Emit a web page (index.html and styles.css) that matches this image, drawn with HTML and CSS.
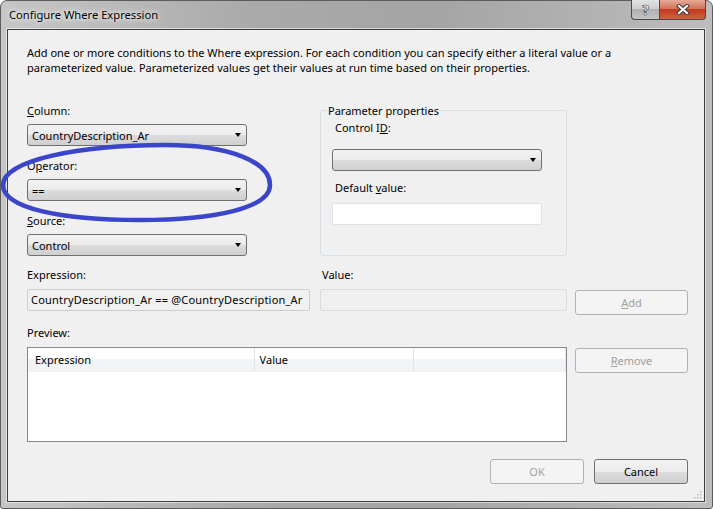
FILE: index.html
```html
<!DOCTYPE html>
<html lang="en">

<head>
    <meta charset="UTF-8">
    <title>Configure Where Expression</title>
    <link rel="stylesheet" href="styles.css">
</head>

<body>
    <div class="window">
        <div class="titlebar">
            <span class="title">Configure Where Expression</span>
            <div class="caption-buttons">
                <span class="cap-btn help">?</span>
                <span class="cap-btn close">
                    <svg width="14" height="11" viewBox="0 0 14 11">
                        <path d="M3 2 L11 9 M11 2 L3 9" stroke="#3b3b3b" stroke-width="4.2" stroke-linecap="square" fill="none" />
                        <path d="M3 2 L11 9 M11 2 L3 9" stroke="#fff" stroke-width="2.2" stroke-linecap="square" fill="none" />
                    </svg>
                </span>
            </div>
        </div>

        <div class="client">
            <p class="intro">Add one or more conditions to the Where expression. For each condition you can specify either a literal value or a<br>parameterized value. Parameterized values get their values at run time based on their properties.</p>

            <div class="top-row">
                <div class="left-col">
                    <label class="lbl"><u>C</u>olumn:</label>
                    <div class="combo"><span>CountryDescription_Ar</span><i class="arrow"></i></div>
                    <label class="lbl gap">O<u>p</u>erator:</label>
                    <div class="combo"><span>==</span><i class="arrow"></i></div>
                    <label class="lbl gap"><u>S</u>ource:</label>
                    <div class="combo"><span>Control</span><i class="arrow"></i></div>
                </div>

                <fieldset class="param-group">
                    <legend>Parameter properties</legend>
                    <label class="lbl inset">Control I<u>D</u>:</label>
                    <div class="combo wide"><span></span><i class="arrow"></i></div>
                    <label class="lbl inset second">Default <u>v</u>alue:</label>
                    <div class="textbox white"></div>
                </fieldset>
            </div>

            <div class="expr-grid">
                <label class="lbl">Expression:</label>
                <label class="lbl value-lbl">Value:</label>
                <span></span>
                <div class="textbox readonly">CountryDescription_Ar == @CountryDescription_Ar</div>
                <div class="textbox disabled"></div>
                <button class="btn" disabled><u>A</u>dd</button>
            </div>

            <label class="lbl preview-lbl">Preview:</label>
            <div class="preview-row">
                <div class="listview">
                    <div class="lv-header">
                        <span class="col col-expr">Expression</span>
                        <span class="col col-val">Value</span>
                        <span class="col col-rest"></span>
                    </div>
                </div>
                <button class="btn" disabled><u>R</u>emove</button>
            </div>

            <div class="footer">
                <button class="btn" disabled>OK</button>
                <button class="btn active">Cancel</button>
            </div>
            <svg class="grip" width="10" height="10" viewBox="0 0 10 10">
                <rect x="7" y="1" width="1.5" height="1.5" fill="#b9b9b9" />
                <rect x="4" y="4" width="1.5" height="1.5" fill="#b9b9b9" />
                <rect x="7" y="4" width="1.5" height="1.5" fill="#b9b9b9" />
                <rect x="1" y="7" width="1.5" height="1.5" fill="#b9b9b9" />
                <rect x="4" y="7" width="1.5" height="1.5" fill="#b9b9b9" />
                <rect x="7" y="7" width="1.5" height="1.5" fill="#b9b9b9" />
            </svg>
        </div>

        <!-- hand drawn marker over the operator box -->
        <svg class="annotation" width="713" height="509" viewBox="0 0 713 509">
            <path d="M3 185 C3 160, 80 145, 165 145 C230 145, 270 162, 270 185 C270 208, 215 220, 140 220 C60 220, 3 208, 3 185 Z"
                fill="none" stroke="#3b45c9" stroke-width="4.5" />
        </svg>
    </div>
</body>

</html>
```

FILE: styles.css
```css
* {
    margin: 0;
    padding: 0;
    box-sizing: border-box;
}

body {
    width: 713px;
    height: 509px;
    overflow: hidden;
    font-family: "Noto Sans", "Open Sans", sans-serif;
    font-size: 11px;
    color: #000;
    background: #fff;
}

.window {
    position: relative;
    width: 713px;
    height: 509px;
    border: 1px solid #5c5c5c;
    border-radius: 7px 7px 3px 3px;
    padding: 0 7px 6px 6px;
    background: linear-gradient(to right, #c6c6c6, #aaaaaa 35%, #a4a4a4 60%, #b6b6b6 90%, #bdbdbd);
}

.titlebar {
    height: 28px;
    display: flex;
    justify-content: space-between;
}

.title {
    margin-left: 2px;
    line-height: 28px;
    font-size: 11.2px;
    text-shadow: 0 0 8px #fff, 0 0 4px #fff;
}

.caption-buttons {
    display: flex;
    margin-top: -1px;
    margin-right: -1px;
    height: 20px;
}

.cap-btn {
    display: flex;
    align-items: center;
    justify-content: center;
    height: 20px;
    border: 1px solid #4a4a4a;
    border-top: none;
}

.help {
    width: 28px;
    border-right: none;
    border-radius: 0 0 0 4px;
    background: linear-gradient(#e2e2e2, #cfcfcf 45%, #b0b0b0 50%, #c4c4c4);
    color: #fff;
    font-weight: bold;
    font-size: 14px;
    -webkit-text-stroke: 0.6px #3b3b3b;
}

.close {
    width: 47px;
    border-radius: 0 0 4px 0;
    background: linear-gradient(#e7a996, #d2745e 45%, #c13a20 50%, #d2613f);
}

.client {
    position: relative;
    height: 473px;
    border: 1px solid #3d3d3d;
    background: #f0f0f0;
    box-shadow: 0 0 0 1px rgba(255, 255, 255, 0.55);
}

.intro {
    padding: 15px 19px 0 19px;
    line-height: 15px;
    height: 45px;
    white-space: nowrap;
}

.lbl {
    display: block;
    line-height: 15px;
    height: 15px;
    white-space: nowrap;
}

.top-row {
    display: flex;
    margin-top: 28px;
    height: 153px;
}

.left-col {
    margin-left: 19px;
    width: 220px;
}

.left-col .combo {
    margin-top: 6px;
}

.lbl.gap {
    margin-top: 12px;
}

.combo {
    display: flex;
    align-items: center;
    height: 22px;
    padding: 0 5px 0 4px;
    border: 1px solid #707070;
    border-radius: 3px;
    background: linear-gradient(#f3f3f3, #ebebeb 50%, #dddddd 50%, #cfcfcf);
    white-space: nowrap;
}

.arrow {
    margin-left: auto;
    width: 0;
    height: 0;
    border-left: 3.5px solid transparent;
    border-right: 3.5px solid transparent;
    border-top: 4px solid #000;
}

.param-group {
    margin-left: 73px;
    width: 247px;
    height: 153px;
    border: 1px solid #d5dfe5;
    border-radius: 3px;
    padding: 0 24px 0 11px;
}

.param-group legend {
    margin-left: -5px;
    padding: 0 1px;
    line-height: 15px;
}

.lbl.inset {
    margin-top: 2px;
    padding-left: 3px;
}

.lbl.second {
    margin-top: 9px;
}

.combo.wide {
    margin-top: 14px;
    width: 210px;
}

.textbox {
    height: 22px;
    line-height: 20px;
    padding: 0 3px;
    border: 1px solid #d2d2d2;
    border-radius: 2px;
    white-space: nowrap;
    overflow: hidden;
}

.textbox.white {
    margin-top: 8px;
    width: 210px;
    background: #fff;
    border-color: #dfe3e8;
}

.textbox.readonly {
    background: #f0f0f0;
    border-color: #cdcdcd;
    letter-spacing: 0.2px;
}

.textbox.disabled {
    background: #f0f0f0;
    border-color: #dadada;
}

.expr-grid {
    display: grid;
    grid-template-columns: 283px 247px 113px;
    grid-template-rows: 15px 25px;
    column-gap: 10px;
    row-gap: 7px;
    margin: 11px 0 0 19px;
}

.expr-grid .btn {
    justify-self: start;
    width: 113px;
    margin-left: -2px;
    margin-top: 1px;
}

.value-lbl {
    padding-left: 2px;
}

.btn {
    font: inherit;
    height: 25px;
    border: 1px solid #707070;
    border-radius: 3px;
    background: linear-gradient(#f3f3f3, #ebebeb 50%, #dddddd 50%, #cfcfcf);
    color: #000;
}

.btn:disabled {
    border-color: #adb2b5;
    background: #f4f4f4;
    color: #a0a0a0;
}

.preview-lbl {
    margin: 11px 0 0 19px;
}

.preview-row {
    display: flex;
    align-items: flex-start;
    margin: 7px 0 0 19px;
}

.preview-row .btn {
    width: 113px;
    margin: 1px 0 0 8px;
}

.listview {
    width: 540px;
    height: 95px;
    border: 1px solid #828790;
    background: #fff;
}

.lv-header {
    display: flex;
    height: 24px;
    background: linear-gradient(#fff 45%, #f3f4f6 45%, #f1f2f4);
}

.col {
    line-height: 24px;
    border-right: 1px solid #e2e4e7;
    padding-left: 7px;
}

.col-expr {
    width: 227px;
}

.col-val {
    width: 160px;
    padding-left: 5px;
}

.col-rest {
    width: 152px;
}

.footer {
    display: flex;
    justify-content: flex-end;
    gap: 10px;
    margin: 17px 16px 0 0;
}

.footer .btn {
    width: 94px;
}

.grip {
    position: absolute;
    right: 1px;
    bottom: 1px;
}

.annotation {
    position: absolute;
    left: -1px;
    top: -1px;
    pointer-events: none;
}
```
